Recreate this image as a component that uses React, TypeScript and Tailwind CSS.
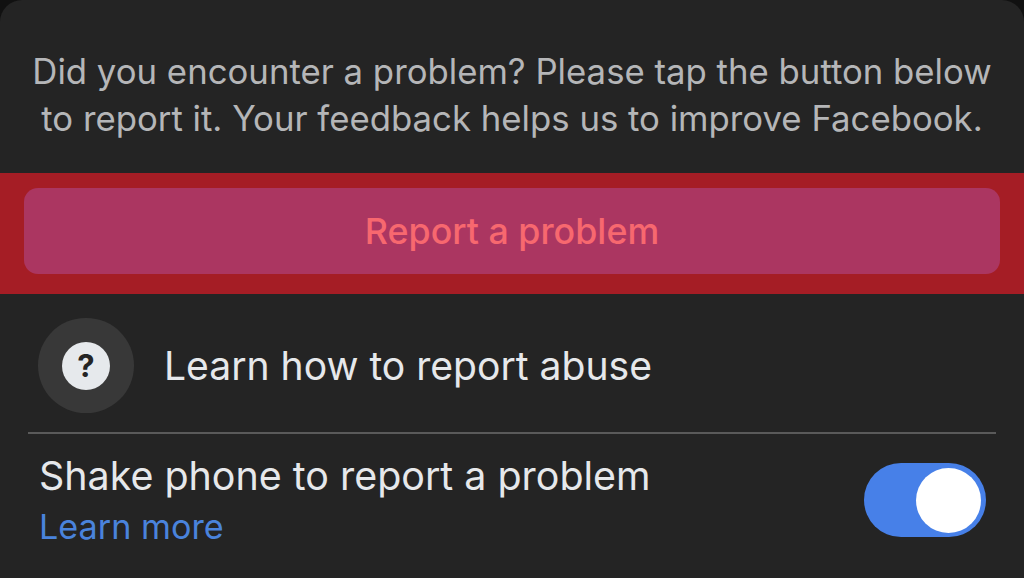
import {Fragment} from "react";

const intro = ["Did you encounter a problem? Please tap the button below", "to report it. Your feedback helps us to improve Facebook."];

const App = () => {
    return (
        <div className="w-[1024px] h-[578px] overflow-hidden bg-[#111111] font-['Inter',sans-serif]">
            <div className="w-full h-full flex flex-col bg-[#242424] rounded-t-[22px]">
                {/* Intro text */}
                <div className="h-[173px] pt-[48px] flex flex-col items-center text-[34.75px] leading-[47px] text-[#b5b6b8]">
                    {intro.map((line) => (
                        <Fragment key={line}>
                            <p className="whitespace-nowrap">{line}</p>
                        </Fragment>
                    ))}
                </div>

                {/* Highlighted button */}
                <div className="h-[121px] bg-[#a51d25] pt-[15px] px-[24px]">
                    <button className="w-full h-[86px] pt-[2px] rounded-[14px] bg-[#ab3661] text-[#f7686f] text-[35.8px] font-medium">
                        Report a problem
                    </button>
                </div>

                {/* Learn row */}
                <div className="flex items-center gap-[30px] pl-[38px] pt-[24px]">
                    <div className="w-[96px] h-[95px] rounded-full bg-[#383838] flex items-center justify-center">
                        <div className="w-[48px] h-[48px] rounded-full bg-[#e6e9ec] flex items-center justify-center text-[#242424] text-[31px] font-bold leading-none">
                            ?
                        </div>
                    </div>
                    <span className="pt-[2px] text-[39.1px] text-[#e6e8eb] whitespace-nowrap">Learn how to report abuse</span>
                </div>

                <div className="h-[2px] bg-[#5a5a5a] ml-[28px] mr-[28px] mt-[19px]"/>

                {/* Shake row */}
                <div className="flex justify-between pl-[39px] pr-[38px] pt-[17px]">
                    <div className="flex flex-col">
                        <span className="text-[39.4px] leading-[50px] text-[#e6e8eb] whitespace-nowrap">Shake phone to report a problem</span>
                        <span className="text-[34.2px] leading-[52px] text-[#4a83dc] whitespace-nowrap">Learn more</span>
                    </div>
                    <div className="w-[122px] h-[74px] mt-[12px] rounded-full bg-[#4780e8] flex items-center justify-end pr-[5px]">
                        <div className="w-[65px] h-[65px] rounded-full bg-white"/>
                    </div>
                </div>
            </div>
        </div>
    );
};

export default App;
